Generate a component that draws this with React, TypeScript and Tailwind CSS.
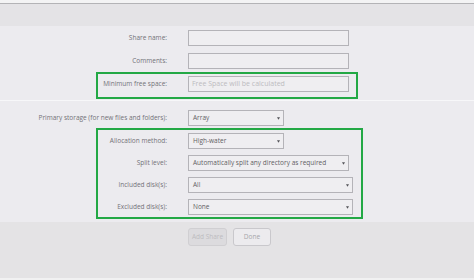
import React from 'react'

const font = { fontFamily: '"Open Sans", "DejaVu Sans", sans-serif' }

function Label({ children }: { children: React.ReactNode }) {
    return (
        <div className="w-[167px] shrink-0 text-right text-[6.5px] leading-none text-[#737278]">{children}</div>
    )
}

function TextInput({ placeholder, width }: { placeholder?: string; width: string }) {
    return (
        <div className={`${width} h-[16px] ml-[21px] border border-[#b4b3b8] bg-[#efeef1] flex items-center px-[3px] text-[7px] text-[#bcbbc0]`}>
            {placeholder}
        </div>
    )
}

function Select({ value, width }: { value: string; width: string }) {
    return (
        <div className={`${width} h-[16px] ml-[21px] border border-[#b4b3b8] bg-[#efeef1] flex items-center justify-between pl-[4px] pr-[3px] text-[6.5px] text-[#5f5e64]`}>
            <span>{value}</span>
            <svg width="3" height="3" viewBox="0 0 3 3">
                <path d="M0 0.3 L3 0.3 L1.5 2.7 Z" fill="#55545a" />
            </svg>
        </div>
    )
}

export default function App() {
    return (
        <div className="relative w-[474px] h-[280px] overflow-hidden bg-[#ecebef]" style={font}>
            <div className="h-[3px] bg-[#f3f3f4]" />
            <div className="h-px bg-[#b3b3b6]" />
            {/* header band */}
            <div className="h-[22px] bg-[#e4e3e6]" />

            {/* share settings */}
            <div className="h-[74px] pt-[4px] flex flex-col gap-[7px]">
                <div className="flex items-center h-[16px]">
                    <Label>Share name:</Label>
                    <TextInput width="w-[161px]" />
                </div>
                <div className="flex items-center h-[16px]">
                    <Label>Comments:</Label>
                    <TextInput width="w-[161px]" />
                </div>
                <div className="flex items-center h-[16px]">
                    <Label>Minimum free space:</Label>
                    <TextInput width="w-[161px]" placeholder="Free Space will be calculated" />
                </div>
            </div>
            <div className="h-px bg-[#f7f7f9]" />

            {/* storage settings */}
            <div className="h-[121px] pt-[9px] flex flex-col">
                <div className="flex items-center h-[16px]">
                    <Label>Primary storage (for new files and folders):</Label>
                    <Select width="w-[96px]" value="Array" />
                </div>
                <div className="flex items-center h-[16px] mt-[7px]">
                    <Label>Allocation method:</Label>
                    <Select width="w-[96px]" value="High-water" />
                </div>
                <div className="flex items-center h-[16px] mt-[6px]">
                    <Label>Split level:</Label>
                    <Select width="w-[161px]" value="Automatically split any directory as required" />
                </div>
                <div className="flex items-center h-[16px] mt-[6px]">
                    <Label>Included disk(s):</Label>
                    <Select width="w-[165px]" value="All" />
                </div>
                <div className="flex items-center h-[16px] mt-[6px]">
                    <Label>Excluded disk(s):</Label>
                    <Select width="w-[165px]" value="None" />
                </div>
            </div>

            {/* footer */}
            <div className="h-[56px] bg-[#e4e3e5] pt-[6px] pl-[188px] flex gap-[6px] items-start">
                <button className="w-[39px] h-[18px] rounded-[3px] border border-[#d0cfd2] bg-[#dcdbde] text-[6.5px] text-[#bdbcc0]" disabled>
                    Add Share
                </button>
                <button className="w-[38px] h-[18px] rounded-[3px] border border-[#c9c8cc] bg-[#ecebee] text-[6.5px] text-[#a6a5aa]">
                    Done
                </button>
            </div>
            <div className="h-[2px] bg-[#f1f1f2]" />

            {/* annotation boxes */}
            <div className="absolute left-[96px] top-[72px] w-[262px] h-[27px] border-2 border-[#23a845] pointer-events-none" />
            <div className="absolute left-[96px] top-[128px] w-[267px] h-[91px] border-2 border-[#23a845] pointer-events-none" />
        </div>
    )
}
